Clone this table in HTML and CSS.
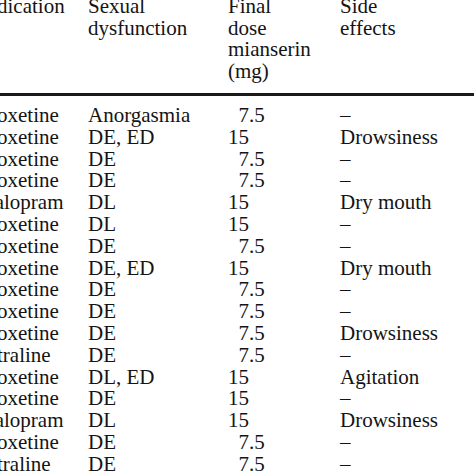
FILE: index.html
```html
<!DOCTYPE html>
<html>
<head>
<meta charset="utf-8">
<link rel="stylesheet" href="styles.css">
</head>
<body>
<div class="frame">
<table class="tbl">
  <colgroup>
    <col class="c1"><col class="c2"><col class="c3"><col class="c4">
  </colgroup>
  <thead>
    <tr>
      <th>Medication</th>
      <th>Sexual<br>dysfunction</th>
      <th>Final<br>dose<br>mianserin<br>(mg)</th>
      <th>Side<br>effects</th>
    </tr>
  </thead>
  <tbody>
    <tr class="first"><td>Fluoxetine</td><td>Anorgasmia</td><td class="d">7.5</td><td>–</td></tr>
    <tr><td>Fluoxetine</td><td>DE, ED</td><td>15</td><td>Drowsiness</td></tr>
    <tr><td>Fluoxetine</td><td>DE</td><td class="d">7.5</td><td>–</td></tr>
    <tr><td>Fluoxetine</td><td>DE</td><td class="d">7.5</td><td>–</td></tr>
    <tr><td>Citalopram</td><td>DL</td><td>15</td><td>Dry mouth</td></tr>
    <tr><td>Fluoxetine</td><td>DL</td><td>15</td><td>–</td></tr>
    <tr><td>Fluoxetine</td><td>DE</td><td class="d">7.5</td><td>–</td></tr>
    <tr><td>Fluoxetine</td><td>DE, ED</td><td>15</td><td>Dry mouth</td></tr>
    <tr><td>Fluoxetine</td><td>DE</td><td class="d">7.5</td><td>–</td></tr>
    <tr><td>Fluoxetine</td><td>DE</td><td class="d">7.5</td><td>–</td></tr>
    <tr><td>Fluoxetine</td><td>DE</td><td class="d">7.5</td><td>Drowsiness</td></tr>
    <tr><td>Sertraline</td><td>DE</td><td class="d">7.5</td><td>–</td></tr>
    <tr><td>Fluoxetine</td><td>DL, ED</td><td>15</td><td>Agitation</td></tr>
    <tr><td>Fluoxetine</td><td>DE</td><td>15</td><td>–</td></tr>
    <tr><td>Citalopram</td><td>DL</td><td>15</td><td>Drowsiness</td></tr>
    <tr><td>Fluoxetine</td><td>DE</td><td class="d">7.5</td><td>–</td></tr>
    <tr><td>Sertraline</td><td>DE</td><td class="d">7.5</td><td>–</td></tr>
  </tbody>
</table>
</div>
</body>
</html>
```
FILE: styles.css
```css
html, body {
  margin: 0;
  padding: 0;
  background: #fff;
}
body {
  width: 474px;
  height: 474px;
  overflow: hidden;
}
.frame {
  width: 474px;
  height: 474px;
  overflow: hidden;
}
.tbl {
  margin-left: -31px;
  margin-top: -4px;
  border-collapse: collapse;
  table-layout: fixed;
  width: 542px;
  font-family: "Liberation Serif", "Times New Roman", serif;
  font-size: 21px;
  line-height: 21.6px;
  color: #141414;
}
.c1 { width: 119px; }
.c2 { width: 140px; }
.c3 { width: 112px; }
.c4 { width: 171px; }
.tbl th, .tbl td {
  padding: 0;
  text-align: left;
  vertical-align: top;
  font-weight: normal;
  white-space: nowrap;
}
.tbl thead th {
  padding-bottom: 10.6px;
  border-bottom: 3px solid #1a1a1a;
}
.tbl tbody td {
  line-height: 21.8px;
}
.tbl tr.first td {
  padding-top: 9px;
}
.tbl td.d {
  padding-left: 10.5px;
}
```
